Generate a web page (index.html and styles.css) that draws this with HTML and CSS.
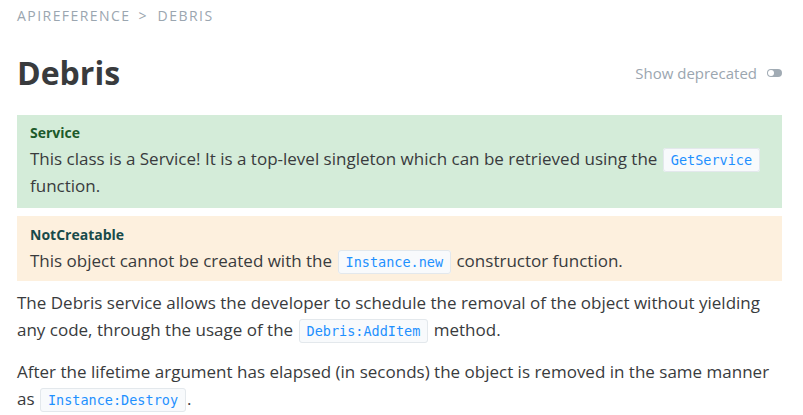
FILE: index.html
```html
<!DOCTYPE html>
<html>
<head>
<meta charset="utf-8">
<link rel="stylesheet" href="styles.css">
</head>
<body>
<div class="page">
  <nav class="crumbs"><span>APIREFERENCE</span><span class="sep">&gt;</span><span>DEBRIS</span></nav>
  <div class="head">
    <h1 class="title">Debris</h1>
    <div class="dep">Show deprecated <span class="toggle"><span class="knob"></span></span></div>
  </div>
  <div class="box green">
    <div class="box-title">Service</div>
    <div class="box-text">This class is a Service! It is a top-level singleton which can be retrieved using the <code>GetService</code> function.</div>
  </div>
  <div class="box orange">
    <div class="box-title">NotCreatable</div>
    <div class="box-text">This object cannot be created with the <code>Instance.new</code> constructor function.</div>
  </div>
  <p class="para">The Debris service allows the developer to schedule the removal of the object without yielding any code, through the usage of the <code>Debris:AddItem</code> method.</p>
  <p class="para">After the lifetime argument has elapsed (in seconds) the object is removed in the same manner as <code>Instance:Destroy</code>.</p>
</div>
</body>
</html>
```
FILE: styles.css
```css
html, body { margin: 0; padding: 0; background: #fff; }
body { font-family: "Open Sans", "Liberation Sans", sans-serif; color: #393b3d; }
.page { padding: 0 21px 0 17px; }
.crumbs { display: flex; font-size: 14px; color: #9ba6b0; padding-top: 6px; line-height: 20px; letter-spacing: 1.45px; }
.crumbs .sep { margin: 0 11px 0 8px; letter-spacing: 0; }
.head { display: flex; justify-content: space-between; align-items: center; margin-top: 27px; height: 40px; }
.title { margin: 0; font-size: 32px; font-weight: 700; color: #393b3d; line-height: 40px; }
.dep { display: flex; align-items: center; gap: 10px; font-size: 15px; color: #9ba6b0; }
.toggle { width: 15px; height: 8px; background: #a1abb4; border-radius: 4px; position: relative; display: inline-block; }
.knob { position: absolute; left: 1px; top: 1px; width: 6px; height: 6px; border-radius: 50%; background: #fff; }
.box { padding: 8px 13px 9px 13px; margin-top: 22px; }
.box + .box { margin-top: 8px; padding: 9px 13px 7px 13px; }
.green { background: #d4ecd9; }
.orange { background: #fdf0de; }
.box-title { font-size: 14px; font-weight: 700; line-height: 20px; }
.green .box-title { color: #1d5a2b; }
.orange .box-title { color: #184a4a; }
.box-text { font-size: 17px; line-height: 27px; margin-top: 2px; }
code { font-family: "DejaVu Sans Mono", monospace; font-size: 13.5px; line-height: 1; color: #1e90ff; background: #f8fafc; border: 1px solid #e3e8ec; border-radius: 3px; padding: 3px 7px; margin: 0 1px; }
.para { font-size: 17px; line-height: 27px; margin: 8px 0 0 0; }
.para + .para { margin-top: 15px; }
```
